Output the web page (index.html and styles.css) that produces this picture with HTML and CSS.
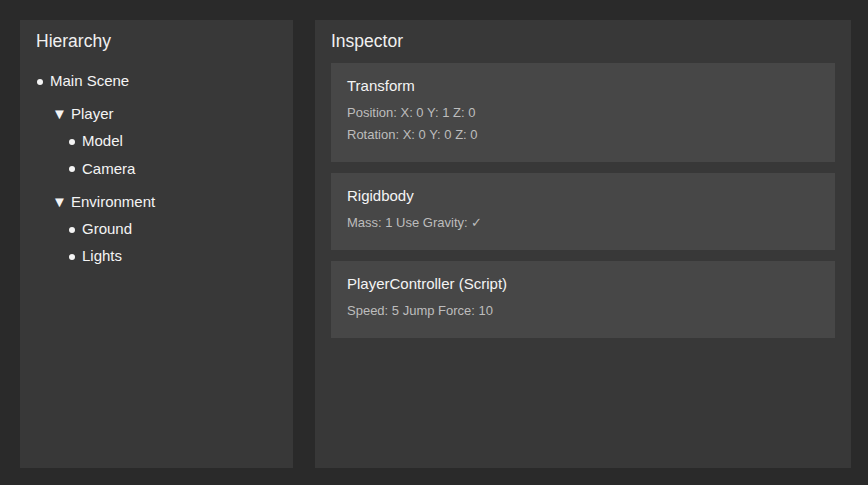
FILE: index.html
```html
<!DOCTYPE html>
<html>
<head>
  <meta charset="utf-8">
  <meta name="viewport" content="width=device-width, initial-scale=1">
  <link rel="stylesheet" href="styles.css">
</head>
<body>
  <div class="editor">
    <div class="panel hierarchy">
      <h3 class="panel-title">Hierarchy</h3>
      <ul class="tree">
        <li class="node leaf">Main Scene</li>
        <li class="group">
          <ul class="tree nested">
            <li class="group">
              <div class="node">&#9660; Player</div>
              <ul class="tree nested">
                <li class="node leaf">Model</li>
                <li class="node leaf">Camera</li>
              </ul>
            </li>
            <li class="group">
              <div class="node">&#9660; Environment</div>
              <ul class="tree nested">
                <li class="node leaf">Ground</li>
                <li class="node leaf">Lights</li>
              </ul>
            </li>
          </ul>
        </li>
      </ul>
    </div>

    <div class="panel inspector">
      <h3 class="panel-title">Inspector</h3>
      <div class="component">
        <h4 class="component-title">Transform</h4>
        <div class="prop">Position: X: 0 Y: 1 Z: 0</div>
        <div class="prop">Rotation: X: 0 Y: 0 Z: 0</div>
      </div>
      <div class="component">
        <h4 class="component-title">Rigidbody</h4>
        <div class="prop">Mass: 1 Use Gravity: &#10003;</div>
      </div>
      <div class="component">
        <h4 class="component-title">PlayerController (Script)</h4>
        <div class="prop">Speed: 5 Jump Force: 10</div>
      </div>
    </div>
  </div>
</body>
</html>
```

FILE: styles.css
```css
/* Base styles */
html, body {
  height: 100%;
}

body {
  margin: 0;
  font-family: "Liberation Sans", Arial, sans-serif;
  background: #2a2a2a;
  color: #eeeeee;
  box-sizing: border-box;
  padding: 20px 17px 17px 20px;
}

.editor {
  display: flex;
  gap: 22px;
  height: 100%;
}

/* Panels */
.panel {
  background: #383838;
  padding: 11px 16px 16px;
  box-sizing: border-box;
}

.hierarchy {
  width: 273px;
  flex-shrink: 0;
}

.inspector {
  flex: 1;
}

.panel-title {
  margin: 0 0 11px;
  font-size: 17.5px;
  font-weight: normal;
  color: #f0f0f0;
}

/* Hierarchy tree */
.tree {
  list-style: none;
  margin: 0;
  padding: 0;
}

.hierarchy > .tree {
  margin-top: 15px;
}

.tree.nested {
  padding-left: 16px;
}

.node {
  font-size: 15px;
  line-height: 17.4px;
  padding: 5px 0;
  color: #f4f4f4;
}

.leaf::before {
  content: '';
  display: inline-block;
  width: 6px;
  height: 6px;
  margin: 0 7px 1px 1px;
  border-radius: 50%;
  background: #f4f4f4;
  vertical-align: middle;
}

.group {
  margin-top: 5.5px;
}

/* Inspector components */
.component {
  background: #474747;
  padding: 14px 16px 16px;
  margin-bottom: 11px;
}

.component-title {
  margin: 0 0 8px;
  font-size: 15px;
  font-weight: normal;
  line-height: 17px;
  color: #f4f4f4;
}

.prop {
  font-size: 13px;
  line-height: 22px;
  color: #bdbdbd;
}
```
